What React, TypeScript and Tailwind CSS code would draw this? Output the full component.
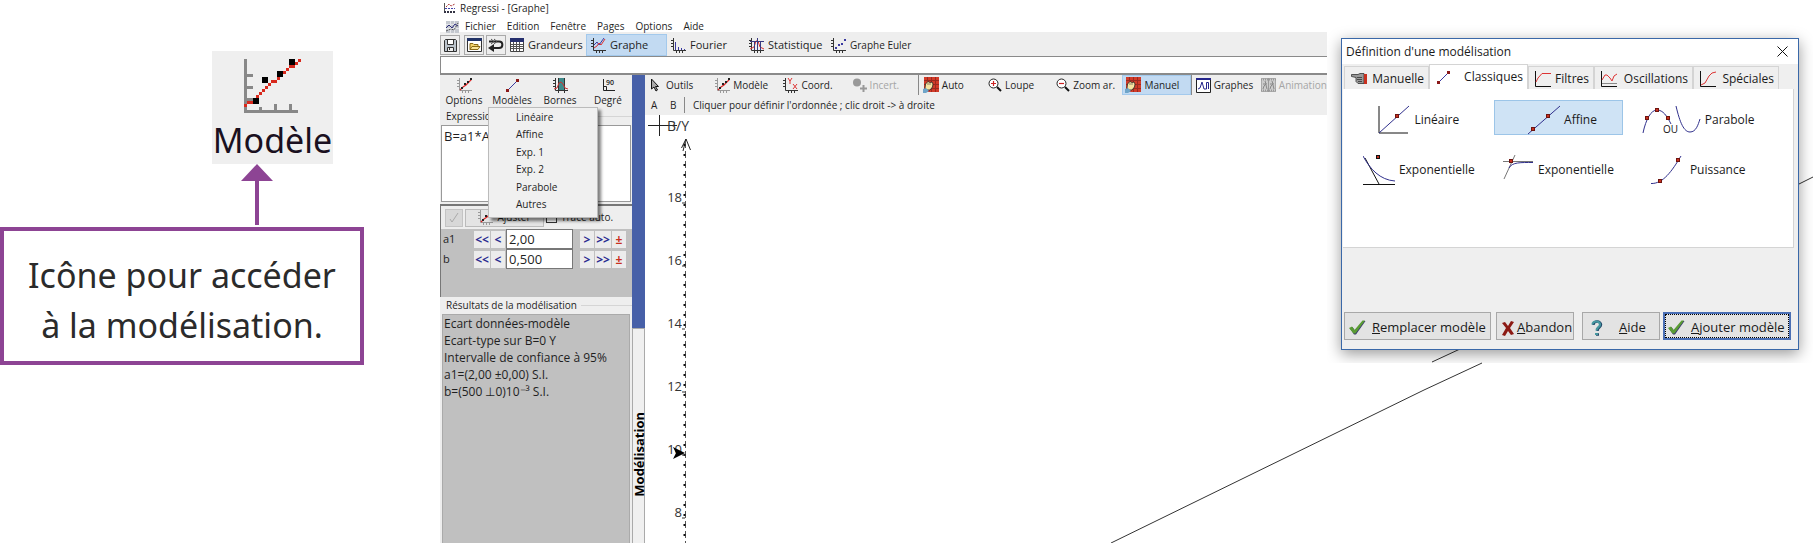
import { useState } from "react";
import type { ReactNode } from "react";

function AxesIcon({ children, color = "#333" }: { children?: ReactNode; color?: string }) {
  return (
    <svg width="15" height="15" viewBox="0 0 15 15" fill="none" className="shrink-0">
      <path d="M2.5 0V12.5H15" stroke={color} />
      <path d="M0 2.5H2M0 5.5H2M0 8.5H2M5.5 13V15M8.5 13V15M11.5 13V15" stroke={color} />
      {children}
    </svg>
  );
}

function ModelIcon() {
  return (
    <AxesIcon color="#999">
      <path d="M3 12L6 9L9 7L15 1" stroke="#d22" strokeWidth="1.2" />
      <path d="M4 9h2v2H4zM7 5h2v2H7zM10 3h2v2h-2zM13 0h2v2h-2z" fill="#222" />
    </AxesIcon>
  );
}

function SegmentIcon() {
  return (
    <svg width="15" height="15" viewBox="0 0 15 15" className="shrink-0">
      <path d="M2 13L13 2" stroke="#3a3aa0" />
      <path d="M1 11h3v3H1zM11 1h3v3h-3z" fill="#8b1a1a" />
    </svg>
  );
}

function BoundsIcon() {
  return (
    <svg width="15" height="15" viewBox="0 0 15 15" fill="none" className="shrink-0">
      <path d="M5 0h6v12H5z" fill="#3f8a8a" />
      <path d="M2.5 0V12.5H15M0 2.5H2M0 5.5H2M0 8.5H2M5.5 0V15M11.5 0V15" stroke="#333" />
      <path d="M1 11L4 10L6 5L8 4L10 6L12 10L15 11" stroke="#c33" />
    </svg>
  );
}

function DegreeIcon() {
  return (
    <svg width="15" height="15" viewBox="0 0 15 15" fill="none" className="shrink-0">
      <path d="M2.5 1V12.5H14M2 8.5H5.5V12" stroke="#222" />
      <text x="5" y="7" fontSize="7" fontFamily="Open Sans, sans-serif" fontWeight="600" fill="#222">90</text>
    </svg>
  );
}

function SaveIcon() {
  return (
    <svg width="13" height="13" viewBox="0 0 13 13" fill="none" stroke="#333" className="shrink-0">
      <path d="M1.5 .5H11.5L12.5 1.5V12.5H.5V1.5Z" fill="#bcc4cc" />
      <path d="M3.5 1V5.5H9.5V1" fill="#fff" />
      <path d="M3.5 12V8.5H9.5V12M5.5 8.5V11" fill="#eee" />
    </svg>
  );
}

function OpenIcon() {
  return (
    <svg width="15" height="14" viewBox="0 0 15 14" className="shrink-0">
      <path d="M.5 .5H14.5V13.5H.5Z" fill="#fff" stroke="#333" />
      <path d="M0 0H15V3H0Z" fill="#223366" />
      <path d="M3 11.5V5.5H6L7 6.5H11V8" fill="#f3d36b" stroke="#8a6a14" />
      <path d="M3 11.5L5 8.5H13L11 11.5Z" fill="#fbe69a" stroke="#8a6a14" />
    </svg>
  );
}

function ReturnIcon() {
  return (
    <svg width="16" height="14" viewBox="0 0 16 14" fill="none" className="shrink-0">
      <path d="M1 3.5H11C15.5 3.5 15.5 10 11 10H4" stroke="#222" strokeWidth="2" />
      <path d="M6 6V14L0 10Z" fill="#222" />
      <path d="M3 1L6 3.5L3 6M6 1L9 3.5L6 6" stroke="#555" />
    </svg>
  );
}

function GridIcon() {
  return (
    <svg width="14" height="14" viewBox="0 0 14 14" className="shrink-0">
      <path d="M.5 .5H13.5V13.5H.5Z" fill="#fff" stroke="#444" />
      <path d="M0 0H14V4H0Z" fill="#26306e" />
      <path d="M1 6.5H13M1 8.5H13M1 10.5H13M3.5 4V13M6.5 4V13M9.5 4V13" stroke="#555" />
    </svg>
  );
}

function CurvesIcon() {
  return (
    <AxesIcon>
      <path d="M3 7L6 4L8 7L13 0" stroke="#3a3aa0" />
      <path d="M3 10L6 8L8 5L10 7L14 1" stroke="#d33" />
    </AxesIcon>
  );
}

function HandGridIcon() {
  return (
    <svg width="16" height="16" viewBox="0 0 16 16" className="shrink-0">
      <path d="M1 0H16V15H1Z" fill="#d23a28" />
      <path d="M4.5 0V15M8.5 0V15M12.5 0V15M1 3.5H16M1 7.5H16M1 11.5H16" stroke="#9a2a20" />
      <path d="M2 11L2.5 7L5 4.5L7 5.5L9 5L10 7L9.5 10L7 13H4Z" fill="#f6e3a0" stroke="#222" strokeWidth=".8" />
      <path d="M5 6V8M7 6V8" stroke="#555" strokeWidth=".7" />
      <path d="M0 12L3 11L6 14L3 16H0Z" fill="#6fa5c9" />
    </svg>
  );
}

function LensIcon({ plus }: { plus?: boolean }) {
  return (
    <svg width="14" height="14" viewBox="0 0 14 14" fill="none" className="shrink-0">
      <circle cx="5.5" cy="5.5" r="4.5" fill="#fff" stroke="#222" />
      <path d="M9 9L13 13" stroke="#111" strokeWidth="2" />
      <path d={plus ? "M3 5.5H8M5.5 3V8" : "M3 5.5H8"} stroke="#c22" strokeWidth="1.2" />
    </svg>
  );
}

function CursorIcon() {
  return (
    <svg width="16" height="14" viewBox="0 0 16 14" className="shrink-0">
      <path d="M4.5 1V11L7 9L9 13L10.5 12L8.5 8.5H11.5Z" fill="#aaa" stroke="#111" />
    </svg>
  );
}

function CoordIcon() {
  return (
    <AxesIcon>
      <path d="M5 0L7 3L9 0M7 3V6M10 6L14 11M14 6L10 11" stroke="#d33" />
    </AxesIcon>
  );
}

function UncertainIcon() {
  return (
    <svg width="15" height="14" viewBox="0 0 15 14" className="shrink-0">
      <circle cx="5" cy="4.5" r="4" fill="#999" />
      <path d="M11.5 7V14M8 10.5H15" stroke="#999" strokeWidth="2" />
    </svg>
  );
}

function GraphsIcon() {
  return (
    <svg width="15" height="15" viewBox="0 0 15 15" fill="none" className="shrink-0">
      <path d="M.5 .5H14.5V14.5H.5Z" fill="#fff" stroke="#222" />
      <path d="M0 1H15" stroke="#26268c" strokeWidth="2" />
      <path d="M2 11L4 10L6 4L8 11L10.5 11V4.5H12.5V11" stroke="#26268c" />
    </svg>
  );
}

function AnimationIcon() {
  return (
    <svg width="15" height="14" viewBox="0 0 15 14" fill="none" className="shrink-0">
      <path d="M.5 .5H14.5V13.5H.5Z" fill="#ccc" stroke="#aaa" />
      <path d="M0 1.5H15M0 12.5H15" stroke="#999" strokeWidth="2" strokeDasharray="1 1" />
      <path d="M7.5 0V14" stroke="#999" />
      <path d="M4 3L5 6L3 8L2 11M5 7L6 11M2 6L6 6M11 3L12 6L10 8L9 11M12 7L13 11M9 6H13" stroke="#888" />
    </svg>
  );
}

function AppIcon() {
  return (
    <svg width="13" height="11" viewBox="0 0 13 11" fill="none" className="shrink-0">
      <path d="M1.5 0V10" stroke="#555" />
      <path d="M3 4L6 1L8 3L12 1" stroke="#a33" strokeDasharray="2 1" />
      <path d="M2 5.5H12" stroke="#44a" strokeDasharray="2 1" />
      <path d="M1 9H12" stroke="#334" strokeWidth="2" strokeDasharray="2 1" />
    </svg>
  );
}

function DocIcon() {
  return (
    <svg width="13" height="12" viewBox="0 0 13 12" fill="none" className="shrink-0">
      <path d="M0 0H13V12H0Z" fill="#c4c8cf" />
      <path d="M0 3.5H13M0 7.5H13M4.5 0V12M8.5 0V12" stroke="#e4e6ea" />
      <path d="M0 7L3 4L6 7L9 3L12 5" stroke="#2b2b78" />
      <path d="M0 10L5 8L8 9L12 2" stroke="#555" strokeDasharray="2 1" />
    </svg>
  );
}

function CheckIcon() {
  return (
    <svg width="17" height="16" viewBox="0 0 17 16" className="shrink-0">
      <path d="M1 8.5L3.5 7L6 10.500L14 1H16.500L7 14.500H5Z" fill="#3b3b70" />
      <path d="M0 8L3 6.5L5.5 10L13.500 .5H16L6.500 13.500H4.500Z" fill="#5a9c34" />
    </svg>
  );
}

function CrossIcon() {
  return (
    <svg width="14" height="15" viewBox="0 0 14 15" className="shrink-0">
      <path d="M1 2L4 1L7 5L10 0L13 1L9 7L13 13L10 14L7 10L4 15L1 14L5 7Z" fill="#8c1a14" />
    </svg>
  );
}

function HelpIcon() {
  return (
    <svg width="12" height="16" viewBox="0 0 12 16" fill="none" className="shrink-0">
      <path d="M2.5 5C2.5 0 10 1 10 4.5C10 7.5 6.5 7 6.5 11M5 14.500H8" stroke="#234a6a" strokeWidth="2.5" />
      <path d="M1.5 4.500C1.5 0 9 1 9 4.5C9 7.5 5.5 7 5.5 10.500M4 14H7" stroke="#4597a0" strokeWidth="2.2" />
    </svg>
  );
}

function Dot({ x, y }: { x: number; y: number }) {
  return <rect x={x - 1.5} y={y - 1.5} width="3" height="3" fill="#c8301f" stroke="#6e1510" />;
}

const menus = ["Fichier", "Edition", "Fenêtre", "Pages", "Options", "Aide"];

const modelTools = [
  { label: "Options", icon: <ModelIcon /> },
  { label: "Modèles", icon: <SegmentIcon /> },
  { label: "Bornes", icon: <BoundsIcon /> },
  { label: "Degré", icon: <DegreeIcon /> },
];

const modelMenu = ["Linéaire", "Affine", "Exp. 1", "Exp. 2", "Parabole", "Autres"];

const graphTools: { label: string; icon: ReactNode; active?: boolean; off?: boolean; sep?: boolean }[] = [
  { label: "Outils", icon: <CursorIcon /> },
  { label: "Modèle", icon: <ModelIcon /> },
  { label: "Coord.", icon: <CoordIcon /> },
  { label: "Incert.", icon: <UncertainIcon />, off: true },
  { label: "Auto", icon: <HandGridIcon />, sep: true },
  { label: "Loupe", icon: <LensIcon plus /> },
  { label: "Zoom ar.", icon: <LensIcon /> },
  { label: "Manuel", icon: <HandGridIcon />, active: true },
  { label: "Graphes", icon: <GraphsIcon />, sep: true },
  { label: "Animation", icon: <AnimationIcon />, off: true },
];

const results = [
  "Ecart données-modèle",
  "Ecart-type sur B=0 Y",
  "Intervalle de confiance à 95%",
  "a1=(2,00 ±0,00) S.I.",
  "b=(500 ⊥0)10⁻³ S.I.",
];

const ticks = [18, 16, 14, 12, 10, 8];

function Callout() {
  return (
    <aside className="w-[440px] shrink-0 pt-[51px]">
      <div className="ml-[212px] flex h-[113px] w-[121px] flex-col items-center bg-[#efefef] pt-2">
        <svg width="57" height="54" viewBox="0 0 19 18" shapeRendering="crispEdges">
          <path d="M0 0h1v17h17v1H0zM1 5h2v1H1zM1 9h2v1H1zM1 13h2v1H1zM5 16h1v1H5zM10 15h1v2h-1zM15 15h1v2h-1z" fill="#888" />
          <path d="M0 15h1v1H0zM1 14h3v1H1zM4 12h1v1H4zM5 11h1v1H5zM6 10h1v1H6zM7 9h1v1H7zM8 8h1v1H8zM9 7h2v1H9zM11 6h1v1h-1zM12 5h1v1h-1zM13 4h1v1h-1zM14 3h1v1h-1zM15 2h2v1h-2zM17 1h1v1h-1zM18 0h1v1h-1z" fill="#d8291d" />
          <path d="M3 13h2v2H3zM6 6h2v2H6zM11 4h2v2h-2zM15 0h2v2h-2z" fill="#000" />
        </svg>
        <span className="mt-2 font-['Noto_Sans',sans-serif] text-[34px] leading-[38px] text-[#1a1020]">Modèle</span>
      </div>
      <svg width="32" height="63" viewBox="0 0 32 63" className="ml-[241px]">
        <path d="M16 0L32 17H18V61H14V17H0Z" fill="#8d4494" />
      </svg>
      <p className="flex h-[138px] w-[364px] items-center justify-center border-4 border-[#8d4494] pt-2 text-center font-['Noto_Sans',sans-serif] text-[34px] leading-[50px] text-[#2b2b2b]">
        Icône pour accéder
        <br />à la modélisation.
      </p>
    </aside>
  );
}

function TopBars() {
  return (
    <header className="mr-[486px]">
      <div className="flex h-[17px] items-center gap-1 pl-[3px]">
        <AppIcon />
        <h1>Regressi - [Graphe]</h1>
      </div>
      <nav className="flex h-[15px] items-center gap-1.5 pt-1 pl-1.5">
        <DocIcon />
        <div className="flex gap-[11px]">
          {menus.map((m) => (
            <button key={m}>{m}</button>
          ))}
        </div>
      </nav>
      <div className="flex h-6 items-center bg-[#eee] pt-0.5 text-[11px]">
        <button aria-label="Enregistrer" className="flex h-5 w-5 items-center justify-center border border-[#aaa]"><SaveIcon /></button>
        <button aria-label="Ouvrir" className="ml-1 flex h-5 w-5 items-center justify-center border border-[#aaa]"><OpenIcon /></button>
        <button aria-label="Retour" className="ml-0.5 flex h-5 w-5 items-center justify-center border border-[#aaa]"><ReturnIcon /></button>
        <button className="ml-1 flex w-[76px] items-center gap-1"><GridIcon />Grandeurs</button>
        <button className="flex h-[22px] w-[81px] items-center gap-1 border border-[#a3c9ec] bg-[#c2daf2] pl-1"><CurvesIcon />Graphe</button>
        <button className="ml-1 flex w-[78px] items-center gap-1">
          <AxesIcon><path d="M4.5 12V4M7.5 12V9M10.5 12V10M13.5 12V11" stroke="#3a3aa0" /></AxesIcon>
          Fourier
        </button>
        <button className="flex w-[82px] items-center gap-1">
          <AxesIcon>
            <path d="M1 11L5 9L7 3L9 3L11 9L15 11" stroke="#d33" />
            <path d="M1 3.5H15M8.5 0V12M5.5 4V12M11.5 4V12" stroke="#3a3a80" />
          </AxesIcon>
          Statistique
        </button>
        <button className="flex items-center gap-1 text-[10px]">
          <AxesIcon><path d="M4 9h2v2H4zM7 6h2v2H7zM10 5h2v2h-2zM13 1h2v2h-2z" fill="#3a3aa0" /></AxesIcon>
          Graphe Euler
        </button>
      </div>
      <input aria-label="Commentaire" className="block h-[19px] w-full border border-r-0 border-b-2 border-[#8a8a8a] bg-white px-1 outline-none" />
    </header>
  );
}

function ParamRow({ name, value }: { name: string; value: string }) {
  const [v, setV] = useState(value);
  const step = "h-[17px] bg-[#ececec] text-center text-xs leading-[15px] font-bold text-[#2b2b90]";
  return (
    <div className="flex h-5 items-center gap-px bg-[#c0c0c0] pr-1.5">
      <label htmlFor={name} className="flex-1 pl-0.5 text-[11px]">{name}</label>
      <button className={`${step} w-4`}>&lt;&lt;</button>
      <button className={`${step} w-[14px]`}>&lt;</button>
      <input id={name} value={v} onChange={(e) => setV(e.target.value)} className="h-5 w-[67px] border border-[#777] bg-white pl-0.5 text-[13px] outline-none" />
      <button className={`${step} ml-1.5 w-[14px]`}>&gt;</button>
      <button className={`${step} w-4`}>&gt;&gt;</button>
      <button className="h-[17px] w-[14px] bg-[#ececec] text-xs leading-[15px] font-bold text-[#c8301f]">±</button>
    </div>
  );
}

function ModelPanel() {
  return (
    <section className="relative flex w-[192px] shrink-0 flex-col bg-[#eee]">
      <div className="flex h-[33px] pt-[3px]">
        {modelTools.map((b) => (
          <button key={b.label} className="flex flex-1 flex-col items-center leading-[14px]">
            {b.icon}
            {b.label}
          </button>
        ))}
      </div>
      <div className="flex h-[17px] items-center gap-1 pl-1.5">
        <label htmlFor="expression">Expression</label>
        <span className="h-px flex-1 bg-[#d5d5d5]" />
      </div>
      <textarea id="expression" defaultValue="B=a1*A" className="mx-px h-[77px] resize-none border border-[#999] bg-white px-0.5 py-0.5 text-[13px] leading-4 outline-none" />
      <div className="mt-0.5 flex h-[93px] flex-col border-t-2 border-l border-[#777] bg-[#c0c0c0]">
        <div className="flex h-[23px] items-center gap-0.5 bg-[#eee] pl-1">
          <button aria-label="Valider" className="flex h-[18px] w-[18px] items-center justify-center border border-[#c4c4c4] bg-[#d8d8d8]">
            <svg width="10" height="11" viewBox="0 0 10 11" fill="none"><path d="M1 7L3 10L9 1" stroke="#aaa" /></svg>
          </button>
          <button className="flex h-[18px] w-[79px] items-center justify-center gap-1 border border-[#bbb] bg-[#e4e4e4]"><ModelIcon />Ajuster</button>
          <label className="flex items-center gap-1 whitespace-nowrap">
            <input type="checkbox" className="h-[11px] w-[11px] appearance-none border border-[#333] bg-white" />
            Tracé auto.
          </label>
        </div>
        <ParamRow name="a1" value="2,00" />
        <ParamRow name="b" value="0,500" />
      </div>
      <div className="flex h-[17px] items-center gap-1 pl-1.5">
        <h2>Résultats de la modélisation</h2>
        <span className="h-px flex-1 bg-[#d5d5d5]" />
      </div>
      <div className="mx-0.5 flex-1 border border-b-0 border-[#aaa] bg-[#c0c0c0] pl-px text-xs leading-[17px]">
        {results.map((r) => <p key={r}>{r}</p>)}
      </div>
      <div role="menu" className="absolute top-[32px] left-[48px] flex h-[111px] w-[110px] flex-col border border-[#bbb] bg-[#f0f0f0] pb-1 shadow-[3px_3px_3px_rgba(0,0,0,0.5)]">
        {modelMenu.map((m) => (
          <button key={m} role="menuitem" className="flex-1 pl-[27px] text-left leading-none hover:bg-[#c2daf2]">{m}</button>
        ))}
      </div>
    </section>
  );
}

function Plot() {
  return (
    <svg className="min-h-0 w-full flex-1" fontFamily="Open Sans, sans-serif" fontSize="13" fill="#333">
      <path d="M3 10.5H32M14.5 0V21" stroke="#222" fill="none" />
      <text x="22" y="16" fontSize="14">B/Y</text>
      <path d="M36.5 33L41 24L45.5 35M41 24L38 36" stroke="#222" fill="none" />
      <path d="M40.5 26V428" stroke="#555" strokeDasharray="7 3" fill="none" />
      <path d="M39.5 29V428" stroke="#111" strokeWidth="2" strokeDasharray="2 8" fill="none" />
      {ticks.map((t, i) => (
        <g key={t}>
          <text x="37" y={87 + i * 63} textAnchor="end">{t}</text>
          <path d={`M37 ${88 + i * 63}h3`} stroke="#333" />
        </g>
      ))}
      <path d="M28 332L40 338L28 344L31 338Z" fill="#000" />
      <path d="M466 428L779 275L837 248M787 247L815 234M1154 69L1168 62" stroke="#333" fill="none" />
    </svg>
  );
}

function GraphArea() {
  return (
    <section className="flex min-w-0 flex-1 flex-col">
      <div className="mr-[486px] h-10 bg-[#eee]">
        <div className="flex h-5">
          {graphTools.map((b) => (
            <div key={b.label} className="flex min-w-0 flex-1">
              {b.sep && <span className="mr-0.5 w-px shrink-0 bg-[#888]" />}
              <button
                disabled={b.off}
                className={`flex min-w-0 flex-1 items-center gap-[3px] pl-0.5 whitespace-nowrap ${b.off ? "text-[#a5a5a5]" : ""} ${b.active ? "border border-[#a3c9ec] bg-[#c2daf2]" : ""}`}
              >
                {b.icon}
                {b.label}
              </button>
            </div>
          ))}
        </div>
        <div className="flex h-5 items-center pl-1.5">
          <button className="w-[19px] text-left">A</button>
          <button className="w-[14px] text-left">B</button>
          <span className="mr-2 h-4 w-px bg-[#888]" />
          <p>Cliquer pour définir l'ordonnée ; clic droit -&gt; à droite</p>
        </div>
      </div>
      <Plot />
    </section>
  );
}

const tabs: { label: string; width: string; icon: ReactNode }[] = [
  {
    label: "Manuelle",
    width: "w-[85px]",
    icon: (
      <svg width="17" height="12" viewBox="0 0 17 12" className="shrink-0">
        <path d="M.5 1.5H7L9 .5H13V10.5H7L5 8.5V4.5L.5 3.5Z" fill="#999" stroke="#333" strokeWidth=".8" />
        <path d="M6 4.5H11M6 6.5H11M7 8.500H11" stroke="#333" strokeWidth=".8" />
        <path d="M13 1h3v10h-3z" fill="#c8301f" />
      </svg>
    ),
  },
  { label: "Classiques", width: "w-[99px]", icon: <SegmentIcon /> },
  {
    label: "Filtres",
    width: "w-[66px]",
    icon: (
      <svg width="17" height="17" viewBox="0 0 17 17" fill="none" className="shrink-0">
        <path d="M.5 0V15.5H16" stroke="#111" />
        <path d="M1 11L3 7L7 2.5H16" stroke="#d33" />
      </svg>
    ),
  },
  {
    label: "Oscillations",
    width: "w-[99px]",
    icon: (
      <svg width="17" height="17" viewBox="0 0 17 17" fill="none" className="shrink-0">
        <path d="M.5 0V15.5H16" stroke="#111" />
        <path d="M1 12.5H16" stroke="#888" />
        <path d="M1 9L4 4L6 4L9 7L11 10L13 5L16 3" stroke="#d33" />
      </svg>
    ),
  },
  {
    label: "Spéciales",
    width: "w-[86px]",
    icon: (
      <svg width="17" height="17" viewBox="0 0 17 17" fill="none" className="shrink-0">
        <path d="M.5 0V15.5H16" stroke="#111" />
        <path d="M1 14L5 12L9 5L12 2L16 1" stroke="#d33" />
      </svg>
    ),
  },
];

const models: { id: string; label: string; icon: ReactNode }[] = [
  {
    id: "lin",
    label: "Linéaire",
    icon: (
      <svg width="32" height="30" viewBox="0 0 32 30" fill="none" className="shrink-0">
        <path d="M1 1V28H30" stroke="#111" />
        <path d="M1 28L31 1" stroke="#30308c" />
        <Dot x={19} y={11} />
      </svg>
    ),
  },
  {
    id: "aff",
    label: "Affine",
    icon: (
      <svg width="32" height="30" viewBox="0 0 32 30" fill="none" className="ml-2 shrink-0">
        <path d="M0 29L32 1" stroke="#30308c" />
        <Dot x={5} y={24} />
        <Dot x={20} y={11} />
      </svg>
    ),
  },
  {
    id: "par",
    label: "Parabole",
    icon: (
      <svg width="59" height="30" viewBox="0 0 59 30" fill="none" className="shrink-0">
        <path d="M1 28C4 14 9 5 15 5S25 11 29 19M34 1C38 18 42 27 48 27S56 20 58 14" stroke="#30308c" />
        <text x="21" y="28" fontSize="10" fontFamily="Open Sans, sans-serif" fill="#111">OU</text>
        <Dot x={5} y={13} />
        <Dot x={15} y={5} />
        <Dot x={26} y={13} />
      </svg>
    ),
  },
  {
    id: "exp1",
    label: "Exponentielle",
    icon: (
      <svg width="32" height="32" viewBox="0 0 32 32" fill="none" className="shrink-0">
        <path d="M0 30.5H32M2 4L16 30" stroke="#111" />
        <path d="M0 2C7 15 17 26 32 27" stroke="#30308c" />
        <rect x="13.5" y="1.5" width="3" height="3" fill="#c8301f" stroke="#111" />
      </svg>
    ),
  },
  {
    id: "exp2",
    label: "Exponentielle",
    icon: (
      <svg width="31" height="32" viewBox="0 0 31 32" fill="none" className="shrink-0">
        <path d="M0 7.5H30M1 25L12 1" stroke="#777" />
        <path d="M6 14C9 8 18 8.5 30 8.5" stroke="#30308c" />
        <Dot x={8} y={7} />
      </svg>
    ),
  },
  {
    id: "pui",
    label: "Puissance",
    icon: (
      <svg width="31" height="32" viewBox="0 0 31 32" fill="none" className="mr-1 shrink-0">
        <path d="M0 29.5C12 30 21 17 30 2" stroke="#30308c" />
        <Dot x={9} y={27} />
        <Dot x={27} y={6} />
      </svg>
    ),
  },
];

function ModelDialog() {
  const [tab, setTab] = useState("Classiques");
  const [model, setModel] = useState("aff");
  const action = "flex h-7 items-center border border-[#a8a8a8] bg-[#e3e3e3] pt-1";

  return (
    <div className="absolute top-[25px] right-0 h-[338px] w-[486px] overflow-hidden pt-[13px] pl-[14px]">
      <div role="dialog" aria-label="Définition d'une modélisation" className="flex h-[312px] w-[458px] flex-col border border-[#3a68a8] bg-[#efefef] text-[13px] text-[#1a1a1a] shadow-[0_4px_14px_rgba(0,0,0,0.4)]">
        <div className="flex h-[25px] shrink-0 items-center justify-between bg-white pr-2.5 pl-1">
          <h2 className="text-xs">Définition d'une modélisation</h2>
          <button aria-label="Fermer">
            <svg width="11" height="11" viewBox="0 0 11 11"><path d="M.5 .5L10.5 10.5M10.5 .5L.5 10.5" stroke="#111" /></svg>
          </button>
        </div>
        <div role="tablist" className="flex h-[25px] shrink-0 items-end pl-0.5 text-xs">
          {tabs.map((t) => (
            <button
              key={t.label}
              role="tab"
              aria-selected={tab === t.label}
              onClick={() => setTab(t.label)}
              className={`flex items-center justify-between border border-b-0 border-[#d4d4d4] pr-1 pl-1.5 ${t.width} ${tab === t.label ? "h-[25px] bg-white" : "h-[23px] pt-0.5"}`}
            >
              {t.icon}
              {t.label}
            </button>
          ))}
        </div>
        <div role="tabpanel" className="mr-1 ml-px grid h-[159px] shrink-0 grid-cols-3 content-start gap-x-2.5 gap-y-[15px] border-r border-b border-[#d4d4d4] bg-white pt-[11px] pr-[30px] pl-[11px] text-xs">
          {models.map((m) => (
            <button
              key={m.id}
              onClick={() => setModel(m.id)}
              className={`flex h-[35px] items-center justify-center gap-1 border pt-1 ${model === m.id ? "border-[#9cc5e8] bg-[#cfe3f5]" : "border-transparent"}`}
            >
              {m.icon}
              {m.label}
            </button>
          ))}
        </div>
        <div className="mt-auto mb-[9px] flex pl-0.5">
          <button className={`${action} w-[147px] gap-1.5 pl-1`}><CheckIcon /><span><u>R</u>emplacer modèle</span></button>
          <button className={`${action} ml-[5px] w-[78px] gap-0.5 pl-1`}><CrossIcon /><span><u>A</u>bandon</span></button>
          <button className={`${action} ml-2 w-[78px] gap-4 pl-2`}><HelpIcon /><span><u>A</u>ide</span></button>
          <button className="ml-[3px] h-7 w-32 border-2 border-[#4a6fb5] bg-[#e3e3e3]">
            <span className="flex h-6 items-center gap-1.5 border border-dotted border-black pt-1 pl-0.5"><CheckIcon /><span><u>A</u>jouter modèle</span></span>
          </button>
        </div>
      </div>
    </div>
  );
}

export default function App() {
  return (
    <main className="flex h-screen overflow-hidden bg-white">
      <Callout />
      <div className="relative flex min-w-0 flex-1 flex-col font-['Open_Sans',sans-serif] text-[10px] text-[#1f1f1f]">
        <TopBars />
        <div className="flex min-h-0 flex-1">
          <ModelPanel />
          <div className="flex w-[13px] shrink-0 flex-col">
            <div className="h-[253px] bg-[#4760a8]" />
            <div className="flex flex-1 items-center justify-end border border-b-0 border-[#aaa] bg-[#f0f0f0] pt-9">
              <button className="rotate-180 text-[13px] leading-[9px] font-bold text-black [writing-mode:vertical-rl]">Modélisation</button>
            </div>
          </div>
          <GraphArea />
        </div>
        <ModelDialog />
      </div>
    </main>
  );
}
